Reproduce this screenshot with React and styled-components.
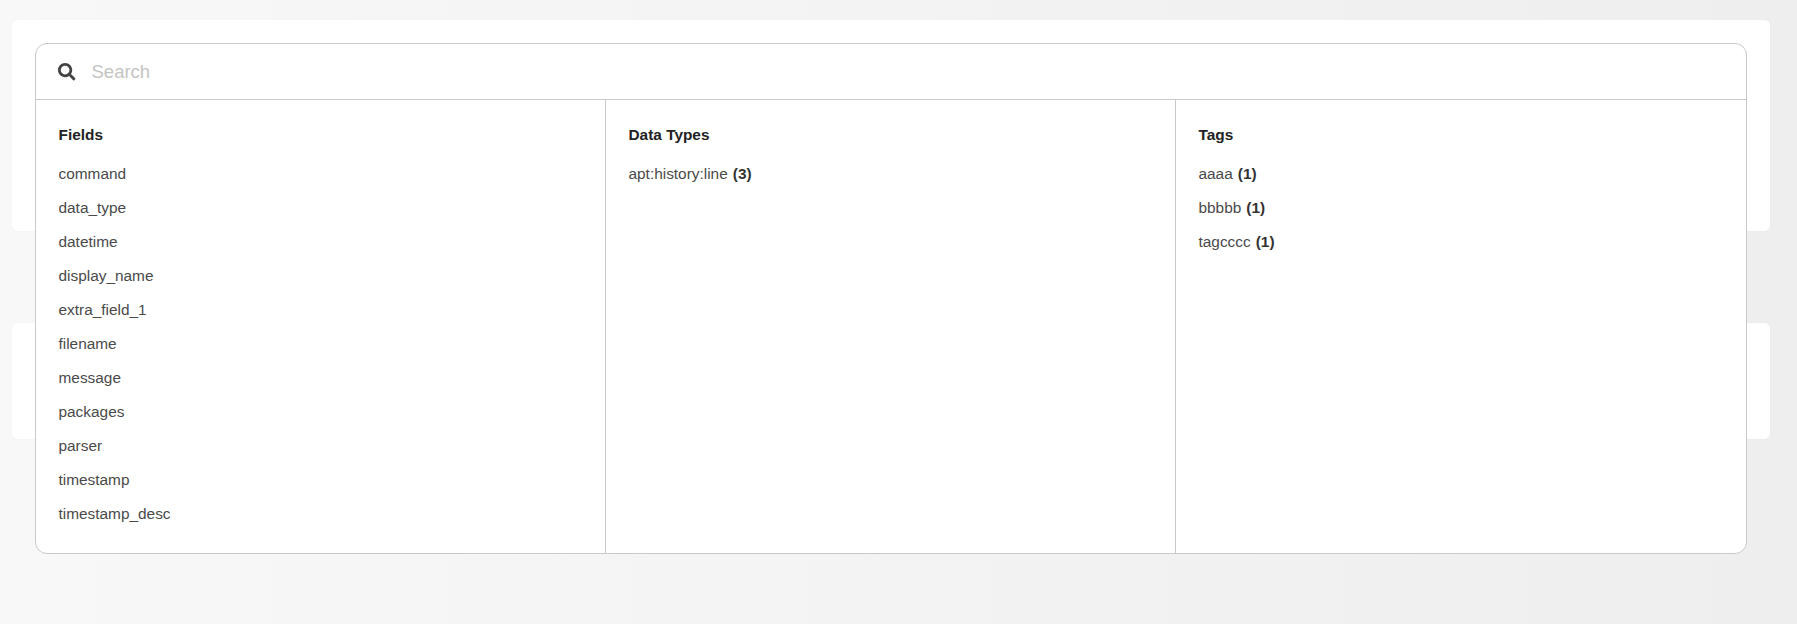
import React from 'react';
import styled, { createGlobalStyle } from 'styled-components';
import { FaSearch } from 'react-icons/fa';

const Global = createGlobalStyle`
  html, body { margin: 0; padding: 0; height: 100%; }
  body { font-family: "Liberation Sans", Arial, sans-serif; overflow: hidden; }
  #root { height: 100%; }
`;

const Page = styled.div`
  position: relative;
  width: 1797px;
  height: 624px;
  box-sizing: border-box;
  padding: 20px 27px 0 12px;
  background: linear-gradient(to right, #f8f8f8 0%, #eeeeee 100%);
`;

const Card = styled.div`
  height: ${p => p.$h}px;
  margin-bottom: ${p => p.$mb || 0}px;
  box-sizing: border-box;
  background: #fff;
  border-radius: 5px;
  box-shadow: 0 0 1px rgba(0, 0, 0, 0.08);
`;

const Dropdown = styled.div`
  position: absolute;
  left: 35px;
  top: 43px;
  width: 1712px;
  height: 511px;
  box-sizing: border-box;
  display: flex;
  flex-direction: column;
  background: #fff;
  border: 1px solid #c9c9c9;
  border-radius: 12px;
  overflow: hidden;
`;

const SearchBar = styled.div`
  display: flex;
  align-items: center;
  height: 56px;
  box-sizing: border-box;
  padding: 1px 0 0 22px;
  border-bottom: 1px solid #c9c9c9;
  flex: none;
`;

const SearchIcon = styled(FaSearch)`
  width: 17.5px;
  height: 17.5px;
  color: #444;
  flex: none;
`;

const SearchInput = styled.input`
  flex: 1;
  margin-left: 16px;
  border: 0;
  outline: 0;
  padding: 0;
  background: transparent;
  font: 18.5px "Liberation Sans", Arial, sans-serif;
  color: #333;
  &::placeholder { color: #c4c4c4; opacity: 1; }
`;

const Columns = styled.div`
  flex: 1;
  display: grid;
  grid-template-columns: 569px 570px 1fr;
  min-height: 0;
`;

const Column = styled.div`
  box-sizing: border-box;
  padding: 26px 22px 0 22.5px;
  & + & { border-left: 1px solid #c9c9c9; }
`;

const Heading = styled.div`
  font-size: 15.4px;
  line-height: 17px;
  font-weight: 700;
  color: #222;
  margin-bottom: 14px;
`;

const Item = styled.div`
  font-size: 15.4px;
  line-height: 34px;
  color: #4a4a4a;
`;

const Count = styled.b`
  margin-left: 5px;
  font-weight: 700;
  color: #333;
`;

const fields = ['command', 'data_type', 'datetime', 'display_name', 'extra_field_1', 'filename', 'message', 'packages', 'parser', 'timestamp', 'timestamp_desc'];
const types = [['apt:history:line', 3]];
const tags = [['aaaa', 1], ['bbbbb', 1], ['tagcccc', 1]];

function Group({ title, items }) {
  return (
    <Column>
      <Heading>{title}</Heading>
      {items.map(i => Array.isArray(i)
        ? <Item key={i[0]}>{i[0]}<Count>({i[1]})</Count></Item>
        : <Item key={i}>{i}</Item>)}
    </Column>
  );
}

export default function App() {
  return (
    <Page>
      <Global />
      <Card $h={211} $mb={92} />
      <Card $h={116} />
      <Dropdown>
        <SearchBar>
          <SearchIcon />
          <SearchInput placeholder="Search" />
        </SearchBar>
        <Columns>
          <Group title="Fields" items={fields} />
          <Group title="Data Types" items={types} />
          <Group title="Tags" items={tags} />
        </Columns>
      </Dropdown>
    </Page>
  );
}
